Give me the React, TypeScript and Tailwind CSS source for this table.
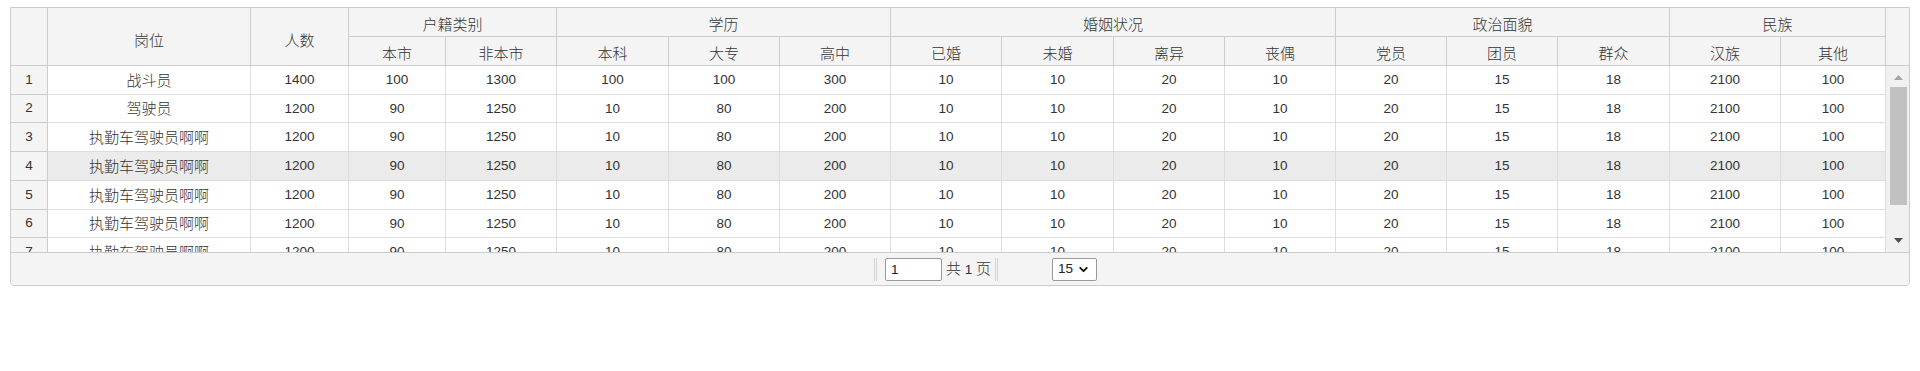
import React from "react";
import { ChevronDown } from "lucide-react";

const bodyCols =
  "grid grid-cols-[37px_203px_98px_97px_111px_112px_111px_111px_111px_112px_111px_111px_111px_111px_112px_111px_105px]";

const fontStack = "font-['Liberation_Sans','Noto_Sans_CJK_SC',sans-serif]";

const groups = [
  { title: "户籍类别", span: "col-span-2" },
  { title: "学历", span: "col-span-3" },
  { title: "婚姻状况", span: "col-span-4" },
  { title: "政治面貌", span: "col-span-3" },
  { title: "民族", span: "col-span-2" },
];

const subHeaders = ["本市", "非本市", "本科", "大专", "高中", "已婚", "未婚", "离异", "丧偶", "党员", "团员", "群众", "汉族", "其他"];

const rest = ["10", "80", "200", "10", "10", "20", "10", "20", "15", "18", "2100", "100"];

const rows: string[][] = [
  ["战斗员", "1400", "100", "1300", "100", "100", "300", "10", "10", "20", "10", "20", "15", "18", "2100", "100"],
  ["驾驶员", "1200", "90", "1250", ...rest],
  ["执勤车驾驶员啊啊", "1200", "90", "1250", ...rest],
  ["执勤车驾驶员啊啊", "1200", "90", "1250", ...rest],
  ["执勤车驾驶员啊啊", "1200", "90", "1250", ...rest],
  ["执勤车驾驶员啊啊", "1200", "90", "1250", ...rest],
  ["执勤车驾驶员啊啊", "1200", "90", "1250", ...rest],
];

const rowHeights = ["h-[29px]", "h-[28px]", "h-[29px]", "h-[29px]", "h-[29px]", "h-[28px]", "h-[29px]"];

const HeadCell: React.FC<{ children?: React.ReactNode; className?: string }> = ({ children, className = "" }) => (
  <div className={`flex items-center justify-center border-r border-b border-[#ccc] pt-[5px] text-[15px] font-light leading-none ${className}`}>
    {children}
  </div>
);

const Scrollbar: React.FC = () => (
  <div className="flex h-[186px] w-[23px] flex-col bg-[#f1f1f1]">
    <div className="flex h-[21px] items-center justify-center pl-[2px] pt-[1px]">
      <svg width="9" height="5" viewBox="0 0 9 5">
        <polygon points="0,5 9,5 4.5,0" fill="#a3a3a3" />
      </svg>
    </div>
    <div className="ml-[4px] h-[118px] w-[17px] bg-[#c1c1c1]" />
    <div className="flex-1" />
    <div className="flex h-[22px] items-center justify-center pb-[2px] pl-[2px]">
      <svg width="9" height="5" viewBox="0 0 9 5">
        <polygon points="0,0 9,0 4.5,5" fill="#505050" />
      </svg>
    </div>
  </div>
);

const App: React.FC = () => {
  return (
    <div className={`min-h-[371px] bg-white pl-[10px] pt-[7px] text-[#333] ${fontStack}`}>
      <div className="w-[1900px] overflow-hidden rounded-b-[4px] border border-[#ccc]">
        {/* header */}
        <div className="grid grid-cols-[37px_203px_98px_97px_111px_112px_111px_111px_111px_112px_111px_111px_111px_111px_112px_111px_105px_23px] grid-rows-[29px_29px] bg-[#f4f4f4]">
          <HeadCell className="row-span-2" />
          <HeadCell className="row-span-2 pt-[8px]">岗位</HeadCell>
          <HeadCell className="row-span-2 pt-[8px]">人数</HeadCell>
          {groups.map((g) => (
            <HeadCell key={g.title} className={g.span}>
              {g.title}
            </HeadCell>
          ))}
          <div className="row-span-2 border-b border-[#ccc]" />
          {subHeaders.map((h) => (
            <HeadCell key={h}>{h}</HeadCell>
          ))}
        </div>

        {/* body */}
        <div className="flex">
          <div className="h-[186px] w-[1875px] overflow-hidden">
            {rows.map((row, i) => (
              <div key={i} className={`${bodyCols} ${rowHeights[i]} ${i === 3 ? "bg-[#ebebeb]" : "bg-white"}`}>
                <div className="flex items-center justify-center border-r border-b border-[#ccc] bg-[#f4f4f4] text-[13.5px]">
                  {i + 1}
                </div>
                {row.map((v, j) => (
                  <div
                    key={j}
                    className={`flex items-center justify-center border-r border-b border-[#ddd] leading-none ${
                      j === 0 ? "text-[15px] font-light" : "text-[13.5px]"
                    }`}
                  >
                    {v}
                  </div>
                ))}
              </div>
            ))}
          </div>
          <Scrollbar />
        </div>

        {/* pager */}
        <div className="flex h-[33px] items-center justify-center border-t border-[#ccc] bg-[#f4f4f4]">
          <div className="invisible w-[51px]" />
          <div className="h-[23px] w-[3px] border-x border-[#d4d4d4]" />
          <input
            readOnly
            value="1"
            className="ml-[8px] h-[23px] w-[57px] rounded-[2px] border border-[#999] bg-white px-[5px] text-[13.5px] text-[#222] outline-none"
          />
          <span className="ml-[4px] w-[46px] whitespace-nowrap text-[15px] font-light leading-none">
            共<span className="text-[13.5px] font-normal"> 1 </span>页
          </span>
          <div className="ml-[3px] h-[23px] w-[3px] border-x border-[#d4d4d4]" />
          <div className="invisible w-[54px]" />
          <div className="flex h-[23px] w-[45px] items-center gap-[4px] rounded-[2px] border border-[#999] bg-white pl-[5px] text-[13.5px] text-[#222]">
            <span>15</span>
            <ChevronDown size={13} strokeWidth={3.5} className="text-[#111]" />
          </div>
        </div>
      </div>
    </div>
  );
};

export default App;
